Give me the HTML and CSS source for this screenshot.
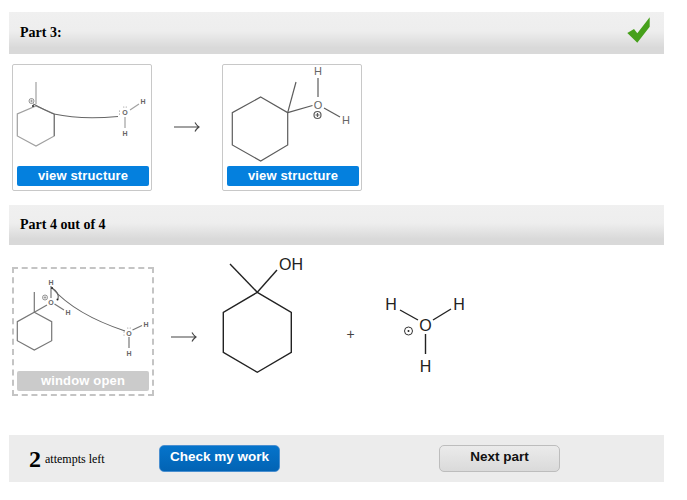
FILE: index.html
```html
<!DOCTYPE html>
<html lang="en">
<head>
<meta charset="utf-8">
<title>Part 4 out of 4</title>
<link rel="stylesheet" href="styles.css">
</head>
<body>
<main class="page">
  <header class="part-head part-head-first">
    <h2 class="part-title">Part 3:</h2>
    <svg class="check" width="24" height="26" viewBox="628 17 24 26"><path class="check-mark" d="M628.3 33 635 29l3.3 4.3 12.4-16v9.4l-12.4 16z"/></svg>
  </header>
  <section class="reaction-row">
    <figure class="card">
      <svg class="mol" width="138" height="101" viewBox="13 65 138 101">
        <g class="thumb-light">
          <path d="M36 82V104"/>
          <path d="M36 106 54.300 114V136L36 146 17.300 136V114z"/>
          <path d="M130 110 139 104"/>
          <path d="M125 117V128"/>
        </g>
        <path class="thumb-dark" d="M54.300 114V136"/>
        <path class="thumb-curve" d="M33 104C38 106 46 111 54 114 72 118 95 118.500 118 116.500"/>
        <circle class="mol-dot" cx="33" cy="106" r="1"/>
        <circle class="thumb-ring" cx="31.500" cy="101" r="2.500"/>
        <path class="thumb-plus" d="M30 101H33M31.500 99.500V102.500"/>
        <circle class="pair-dot" cx="123.800" cy="107" r="0.500"/>
        <circle class="pair-dot" cx="126.200" cy="107" r="0.500"/>
        <circle class="pair-dot" cx="119.500" cy="111" r="0.500"/>
        <circle class="pair-dot" cx="119.500" cy="114" r="0.500"/>
        <text class="thumb-text" x="125" y="115">O</text>
        <text class="thumb-text" x="143" y="104">H</text>
        <text class="thumb-text" x="125" y="136">H</text>
      </svg>
      <button class="view-btn">view structure</button>
    </figure>
    <div class="arrow-slot arrow-slot-a">
      <svg class="arrow" width="26" height="12" viewBox="0 0 26 12"><path d="M0 6H25M21 1.500C22 3.500 23.500 5 25 6 23.500 7 22 8.500 21 10.500"/></svg>
    </div>
    <figure class="card">
      <svg class="mol" width="138" height="101" viewBox="223 65 138 101">
        <g class="product-thin">
          <path d="M260.700 97 287.700 112.700V145L260.700 161 232.300 145V112.700z"/>
          <path d="M287.700 112.700 296 82"/>
          <path d="M287.700 112.700 312.500 105.500"/>
          <path d="M318 78V97"/>
          <path d="M324 108 340 117"/>
          <circle cx="317.500" cy="115" r="3.500"/>
          <path d="M315.500 115H319.500M317.500 113V117"/>
        </g>
        <text class="mol-text-sm" x="318" y="108.500">O</text>
        <text class="mol-text-sm" x="318" y="75">H</text>
        <text class="mol-text-sm" x="346" y="124">H</text>
      </svg>
      <button class="view-btn">view structure</button>
    </figure>
  </section>
  <header class="part-head part-head-second">
    <h2 class="part-title">Part 4 out of 4</h2>
  </header>
  <section class="reaction-row-main">
    <figure class="card card-open">
      <svg class="mol" width="138" height="100" viewBox="14 270 138 100">
        <g class="thumb-mid">
          <path d="M34.300 293V313.300"/>
          <path d="M34.300 313.300 51.700 322.700V341.700L34.300 351 17.300 341.700V322.700z"/>
          <path d="M34.300 313.300 47 306"/>
          <path d="M51 287V299"/>
          <path d="M54.500 305 64 311"/>
          <path d="M132.500 331 142 326.500"/>
          <path d="M129 338V349"/>
        </g>
        <path class="thumb-curve" d="M52 289C67 306 92 321 125 332"/>
        <path class="thumb-curve" d="M52 289C57 292 59 296 58 300"/>
        <circle class="mol-dot" cx="52" cy="289" r="1"/>
        <circle class="mol-dot" cx="57.500" cy="300.500" r="1"/>
        <circle class="thumb-ring" cx="45" cy="298.500" r="2.500"/>
        <path class="thumb-plus" d="M43.500 298.500H46.500M45 297V300"/>
        <circle class="pair-dot" cx="127.800" cy="329" r="0.500"/>
        <circle class="pair-dot" cx="130.200" cy="329" r="0.500"/>
        <circle class="pair-dot" cx="124" cy="333" r="0.500"/>
        <circle class="pair-dot" cx="124" cy="336" r="0.500"/>
        <text class="thumb-text" x="51" y="306">O</text>
        <text class="thumb-text" x="51" y="286">H</text>
        <text class="thumb-text" x="68" y="316">H</text>
        <text class="thumb-text" x="129" y="337">O</text>
        <text class="thumb-text" x="146" y="328">H</text>
        <text class="thumb-text" x="129" y="357">H</text>
      </svg>
      <button class="open-btn">window open</button>
    </figure>
    <div class="arrow-slot arrow-slot-b">
      <svg class="arrow" width="26" height="12" viewBox="0 0 26 12"><path d="M0 6H25M21 1.500C22 3.500 23.500 5 25 6 23.500 7 22 8.500 21 10.500"/></svg>
    </div>
    <svg class="products" width="270" height="190" viewBox="220 245 270 190">
      <g class="product-bold">
        <path d="M257.300 292.300 291.300 312.300V352.300L257.300 372.300 223.300 352.300V312.300z"/>
        <path d="M257.300 292.300 230 264"/>
        <path d="M257.300 292.300 277 270"/>
        <path d="M400 310 418 320"/>
        <path d="M433 320 451 309"/>
        <path d="M425.500 334V354"/>
      </g>
      <text class="prod-text" x="279" y="270">OH</text>
      <text class="prod-plus" x="350.500" y="339">+</text>
      <text class="prod-text prod-mid" x="425.500" y="331">O</text>
      <text class="prod-text prod-mid" x="391" y="310">H</text>
      <text class="prod-text prod-mid" x="459" y="310">H</text>
      <text class="prod-text prod-mid" x="425.500" y="372">H</text>
      <circle class="prod-ring" cx="408.500" cy="331" r="4"/>
      <circle class="mol-dot" cx="408.500" cy="331" r="1"/>
    </svg>
  </section>
  <footer class="actions">
    <div class="attempts"><span class="attempts-num">2</span><span class="attempts-label">attempts left</span></div>
    <button class="check-btn">Check my work</button>
    <button class="next-btn">Next part</button>
  </footer>
</main>
</body>
</html>
```
FILE: styles.css
```css
html, body {
  margin: 0;
  padding: 0;
  background: #fff;
}
body {
  padding: 12px 0 0 9px;
  font-family: "Liberation Serif", serif;
  color: #000;
}
.page {
  width: 655px;
}
.part-head {
  display: flex;
  align-items: center;
  justify-content: space-between;
  padding: 0 13px 0 11px;
  background: linear-gradient(#f0f0f0 0%, #eeeeee 45%, #d9d9d9 85%, #d9d9d9 100%);
}
.part-head-first {
  height: 42px;
}
.part-head-second {
  height: 40px;
  margin-top: 14px;
}
.part-title {
  margin: 0;
  font-size: 14px;
  font-weight: bold;
  line-height: 16px;
}
.check {
  display: block;
  margin-bottom: 6px;
}
.check-mark {
  fill: #46a01b;
}
.reaction-row {
  display: flex;
  align-items: flex-start;
  margin: 10px 0 0 3px;
}
.reaction-row-main {
  display: flex;
  align-items: flex-start;
  height: 190px;
  margin-left: 3px;
}
.card {
  box-sizing: border-box;
  width: 140px;
  height: 127px;
  margin: 0;
  border: 1px solid #c8c8c8;
  border-radius: 2px;
  background: #fff;
  display: flex;
  flex-direction: column;
  align-items: flex-start;
}
.card-open {
  width: 142px;
  height: 129px;
  margin-top: 22px;
  border: 2px dashed #c4c4c4;
  border-radius: 0;
}
.mol {
  display: block;
  flex: none;
}
.view-btn,
.open-btn {
  display: block;
  width: 132px;
  height: 20px;
  margin: 0 0 0 4px;
  padding: 0;
  border: 0;
  border-radius: 2px;
  color: #fff;
  font: bold 13px/20px "Liberation Sans", sans-serif;
  letter-spacing: 0.15px;
  text-align: center;
}
.view-btn {
  background: #0480de;
}
.open-btn {
  width: 132px;
  margin-left: 3px;
  margin-top: 2px;
  background: #cbcbcb;
}
.arrow-slot {
  display: flex;
  flex: none;
}
.arrow-slot-a {
  width: 70px;
  padding-top: 57px;
  padding-left: 22px;
  box-sizing: border-box;
}
.arrow-slot-b {
  width: 66px;
  padding-top: 86px;
  padding-left: 17px;
  box-sizing: border-box;
}
.arrow {
  display: block;
}
.arrow path {
  fill: none;
  stroke: #444;
  stroke-width: 1.100;
}
.products {
  display: block;
  flex: none;
}
.thumb-light path {
  fill: none;
  stroke: #a0a0a0;
  stroke-width: 1.200;
}
.thumb-dark {
  fill: none;
  stroke: #777;
  stroke-width: 1.200;
}
.thumb-mid path {
  fill: none;
  stroke: #777;
  stroke-width: 1.200;
}
.thumb-curve {
  fill: none;
  stroke: #666;
  stroke-width: 1.100;
}
.thumb-ring {
  fill: none;
  stroke: #777;
  stroke-width: 0.800;
}
.thumb-plus {
  fill: none;
  stroke: #777;
  stroke-width: 0.600;
}
.pair-dot {
  fill: #777;
}
.mol-dot {
  fill: #222;
}
.thumb-text {
  fill: #666;
  font: bold 7px "Liberation Sans", sans-serif;
  text-anchor: middle;
}
.product-thin path,
.product-thin circle {
  fill: none;
  stroke: #5c5c5c;
  stroke-width: 1.200;
}
.mol-text-sm {
  fill: #666;
  font: 11px "Liberation Sans", sans-serif;
  text-anchor: middle;
}
.product-bold path {
  fill: none;
  stroke: #222;
  stroke-width: 1.400;
}
.prod-text {
  fill: #222;
  font: 16px "Liberation Sans", sans-serif;
}
.prod-mid {
  text-anchor: middle;
}
.prod-plus {
  fill: #444;
  font: 14px "Liberation Sans", sans-serif;
  text-anchor: middle;
}
.prod-ring {
  fill: none;
  stroke: #333;
  stroke-width: 1;
}
.actions {
  display: flex;
  align-items: center;
  height: 47px;
  background: #ececec;
  padding-left: 20px;
  box-sizing: border-box;
}
.attempts {
  display: flex;
  align-items: center;
  width: 130px;
}
.attempts-num {
  width: 16px;
  font-size: 24px;
  font-weight: bold;
  line-height: 26px;
}
.attempts-label {
  font-size: 12px;
  line-height: 14px;
}
.check-btn,
.next-btn {
  box-sizing: border-box;
  width: 121px;
  height: 27px;
  padding: 0 0 3px;
  border-radius: 5px;
  font: bold 13.500px/1 "Liberation Sans", sans-serif;
  text-align: center;
}
.check-btn {
  border: 1px solid #4a8fd0;
  background: linear-gradient(#0574cb, #0263b4);
  color: #fff;
}
.next-btn {
  margin-left: 159px;
  border: 1px solid #bdbdbd;
  background: linear-gradient(#ebebeb, #dadada);
  color: #111;
}
```
